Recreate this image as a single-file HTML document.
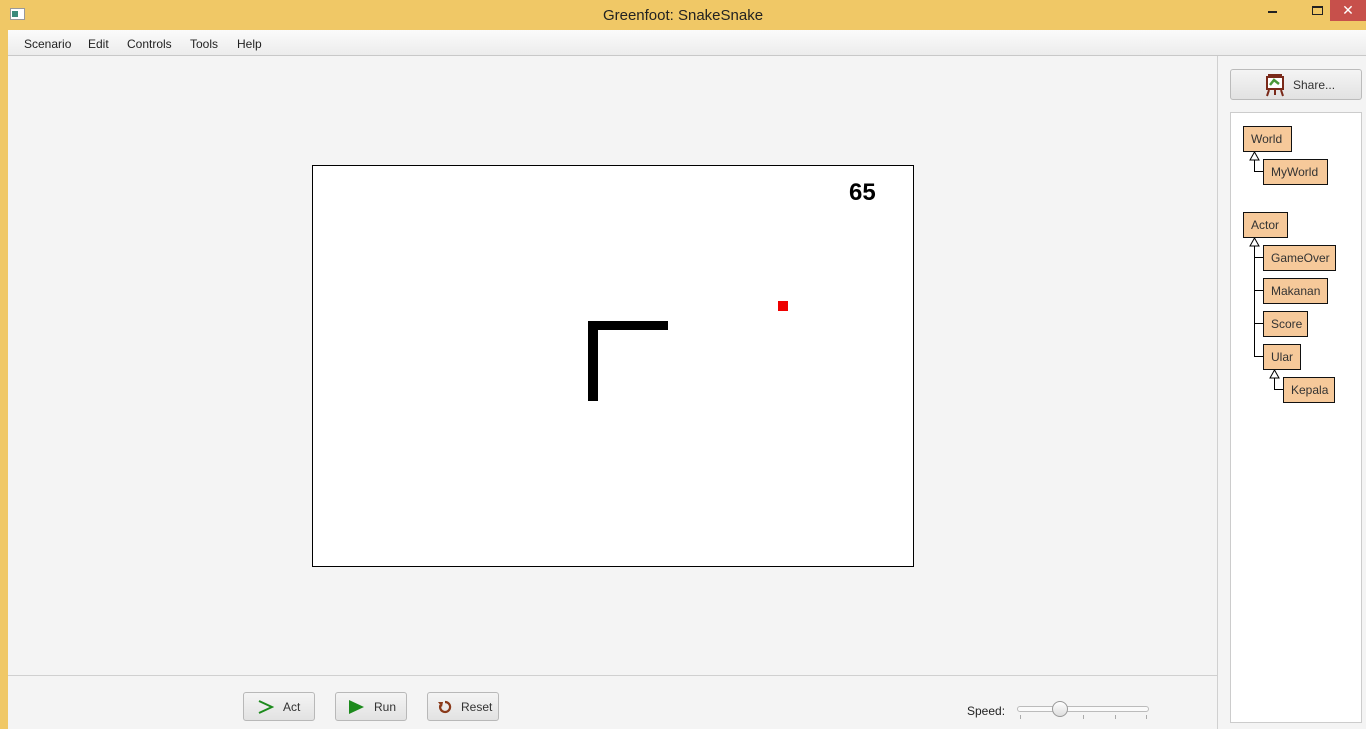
<!DOCTYPE html>
<html><head><style>
*{margin:0;padding:0;box-sizing:border-box}
body{width:1366px;height:729px;overflow:hidden;background:#f0c866;font-family:"Liberation Sans",sans-serif;font-size:12px;color:#222;position:relative}
.a{position:absolute}
.cls{position:absolute;background:#f6c99a;border:1px solid #111;font-size:12px;color:#333;padding-left:7px;line-height:25px;height:26px}
.btn{position:absolute;top:692px;height:29px;border:1px solid #b8b8b8;border-radius:3px;background:linear-gradient(#f4f4f4,#e2e2e2);font-size:12px;color:#333;line-height:28px}
.ln{position:absolute;background:#000}
</style></head><body>
<div class="a" style="left:10px;top:8px;width:15px;height:12px;background:#fff;border:1px solid #999"><div style="position:absolute;left:1px;top:2px;width:6px;height:6px;background:#3a8a7a"></div></div>
<div class="a" style="left:0;top:7px;width:1366px;text-align:center;font-size:15px;color:#222">Greenfoot: SnakeSnake</div>
<div class="a" style="left:1268px;top:11px;width:9px;height:2px;background:#222"></div>
<div class="a" style="left:1312px;top:6px;width:11px;height:9px;border:1px solid #222;border-top-width:2px"></div>
<div class="a" style="left:1330px;top:0;width:36px;height:21px;background:#c7504b;color:#fff;text-align:center;font-size:14px;line-height:21px">✕</div>
<div class="a" style="left:8px;top:30px;width:1358px;height:699px;background:#f4f4f4"></div>
<div class="a" style="left:8px;top:30px;width:1358px;height:26px;background:linear-gradient(#fbfbfb,#ececec);border-bottom:1px solid #c8c8c8"></div>
<div class="a" style="left:24px;top:37px;font-size:12px">Scenario</div>
<div class="a" style="left:88px;top:37px">Edit</div>
<div class="a" style="left:127px;top:37px">Controls</div>
<div class="a" style="left:190px;top:37px">Tools</div>
<div class="a" style="left:237px;top:37px">Help</div>
<div class="a" style="left:1217px;top:56px;width:1px;height:673px;background:#d0d0d0"></div>
<div class="a" style="left:8px;top:675px;width:1209px;height:1px;background:#d0d0d0"></div>
<div class="a" style="left:312px;top:165px;width:602px;height:402px;background:#fff;border:1px solid #000"></div>
<div class="a" style="left:849px;top:179px;font-size:24px;font-weight:bold;color:#000">65</div>
<div class="a" style="left:588px;top:321px;width:80px;height:9px;background:#000"></div>
<div class="a" style="left:588px;top:321px;width:10px;height:80px;background:#000"></div>
<div class="a" style="left:778px;top:301px;width:10px;height:10px;background:#e00"></div>
<div class="btn" style="left:243px;width:72px"><svg class="a" style="left:14px;top:7px" width="16" height="14"><path d="M1 1 L14 7 L1 13" fill="none" stroke="#1c8a1c" stroke-width="2"/></svg><span class="a" style="left:39px">Act</span></div>
<div class="btn" style="left:335px;width:72px"><svg class="a" style="left:12px;top:7px" width="16" height="14"><path d="M1 0 L16 7 L1 14Z" fill="#1c8a1c"/></svg><span class="a" style="left:38px">Run</span></div>
<div class="btn" style="left:427px;width:72px"><svg class="a" style="left:10px;top:7px" width="14" height="14"><path d="M7 2 A5 5 0 1 1 2.5 5" fill="none" stroke="#8a3a1a" stroke-width="2.2"/><path d="M0 2 L5 2 L4 7Z" fill="#8a3a1a"/></svg><span class="a" style="left:33px">Reset</span></div>
<div class="a" style="left:967px;top:704px">Speed:</div>
<div class="a" style="left:1017px;top:706px;width:132px;height:6px;border:1px solid #bbb;border-radius:3px;background:#fafafa"></div>
<div class="a" style="left:1052px;top:701px;width:16px;height:16px;border:1px solid #999;border-radius:50%;background:linear-gradient(#fff,#ddd)"></div>
<div class="a" style="left:1020px;top:715px;width:1px;height:4px;background:#aaa"></div>
<div class="a" style="left:1083px;top:715px;width:1px;height:4px;background:#aaa"></div>
<div class="a" style="left:1115px;top:715px;width:1px;height:4px;background:#aaa"></div>
<div class="a" style="left:1146px;top:715px;width:1px;height:4px;background:#aaa"></div>
<div class="a" style="left:1230px;top:69px;width:132px;height:31px;border:1px solid #bbb;border-radius:3px;background:linear-gradient(#f4f4f4,#e2e2e2)"></div>
<svg class="a" style="left:1264px;top:73px" width="22" height="24"><rect x="4" y="1" width="14" height="2" fill="#7a2a1a"/><rect x="2" y="3" width="18" height="14" fill="#7a2a1a"/><rect x="4" y="5" width="14" height="10" fill="#fff"/><path d="M6 12 L10 7 L15 11" stroke="#4a9a3a" stroke-width="2.5" fill="none"/><path d="M5 17 L3 23 M17 17 L19 23 M11 17 L11 22" stroke="#7a2a1a" stroke-width="2"/></svg>
<div class="a" style="left:1293px;top:78px;color:#333">Share...</div>
<div class="a" style="left:1230px;top:112px;width:132px;height:611px;background:#fff;border:1px solid #ccc"></div>
<div class="ln" style="left:1254px;top:160px;width:1px;height:12px"></div><div class="ln" style="left:1254px;top:171px;width:9px;height:1px"></div>
<svg class="a" style="left:1249px;top:151px" width="11" height="10"><path d="M5.5 1 L10 9 L1 9Z" fill="#fff" stroke="#000"/></svg>
<div class="ln" style="left:1254px;top:246px;width:1px;height:111px"></div>
<div class="ln" style="left:1254px;top:257px;width:9px;height:1px"></div>
<div class="ln" style="left:1254px;top:290px;width:9px;height:1px"></div>
<div class="ln" style="left:1254px;top:323px;width:9px;height:1px"></div>
<div class="ln" style="left:1254px;top:356px;width:9px;height:1px"></div>
<svg class="a" style="left:1249px;top:237px" width="11" height="10"><path d="M5.5 1 L10 9 L1 9Z" fill="#fff" stroke="#000"/></svg>
<div class="ln" style="left:1274px;top:378px;width:1px;height:12px"></div><div class="ln" style="left:1274px;top:389px;width:9px;height:1px"></div>
<svg class="a" style="left:1269px;top:369px" width="11" height="10"><path d="M5.5 1 L10 9 L1 9Z" fill="#fff" stroke="#000"/></svg>
<div class="cls" style="left:1243px;top:126px;width:49px">World</div>
<div class="cls" style="left:1263px;top:159px;width:65px">MyWorld</div>
<div class="cls" style="left:1243px;top:212px;width:45px">Actor</div>
<div class="cls" style="left:1263px;top:245px;width:73px">GameOver</div>
<div class="cls" style="left:1263px;top:278px;width:65px">Makanan</div>
<div class="cls" style="left:1263px;top:311px;width:45px">Score</div>
<div class="cls" style="left:1263px;top:344px;width:38px">Ular</div>
<div class="cls" style="left:1283px;top:377px;width:52px">Kepala</div>
</body></html>
